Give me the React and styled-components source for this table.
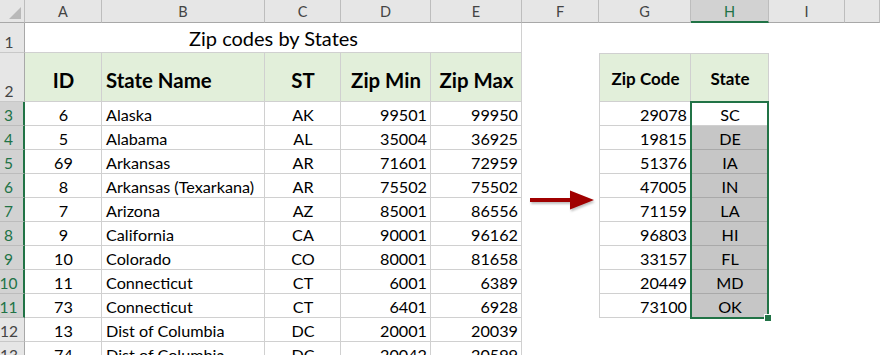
import React from "react";
import styled, { createGlobalStyle, css } from "styled-components";

const GlobalStyle = createGlobalStyle`
  html, body { margin: 0; padding: 0; background: #ffffff; }
  body { overflow: hidden; font-family: Lato, "Open Sans", sans-serif; }
`;

const GRID = "#d0d0d0";
const GREEN = "#217346";

const place = css`
  grid-column: ${(p) => p.$col};
  grid-row: ${(p) => p.$row};
`;

const Sheet = styled.div`
  position: relative;
  display: grid;
  grid-template-columns: 25px 77px 163px 76px 90px 91px 77px 92px 78px 76px 1fr;
  grid-template-rows: 23px 30px 49px repeat(11, 24px);
  width: 880px;
  height: 355px;
  overflow: hidden;
  font-family: Lato, "Open Sans", sans-serif;
  color: #000;
`;

const Corner = styled.div`
  ${place};
  position: relative;
  background: #e6e6e6;
  border-right: 1px solid #bdbdbd;
  border-bottom: 1px solid #a8a8a8;
  box-sizing: border-box;
  &::after {
    content: "";
    position: absolute;
    right: 3px;
    bottom: 3px;
    width: 0;
    height: 0;
    border-left: 12px solid transparent;
    border-bottom: 12px solid #b9b9b9;
  }
`;

const ColHeader = styled.div`
  ${place};
  box-sizing: border-box;
  display: flex;
  align-items: center;
  justify-content: center;
  background: ${(p) => (p.$selected ? "#d2d2d2" : "#e6e6e6")};
  color: ${(p) => (p.$selected ? GREEN : "#444")};
  border-right: 1px solid #bdbdbd;
  border-bottom: ${(p) => (p.$selected ? `2px solid ${GREEN}` : "1px solid #a8a8a8")};
  font-size: 14.5px;
  padding-top: 1px;
`;

const RowHeader = styled.div`
  ${place};
  box-sizing: border-box;
  display: flex;
  align-items: flex-end;
  justify-content: center;
  padding-right: 6px;
  background: ${(p) => (p.$selected ? "#d2d2d2" : "#e6e6e6")};
  color: ${(p) => (p.$selected ? GREEN : "#444")};
  border-right: ${(p) => (p.$selected ? `2px solid ${GREEN}` : "1px solid #a8a8a8")};
  border-bottom: 1px solid ${(p) => (p.$selected ? "#bcbcbc" : "#c8c8c8")};
  font-size: 15.5px;
  line-height: 20px;
`;

const Cell = styled.div`
  ${place};
  box-sizing: border-box;
  display: flex;
  align-items: flex-end;
  justify-content: ${(p) =>
    p.$align === "left" ? "flex-start" : p.$align === "right" ? "flex-end" : "center"};
  padding: 0 3px 0 4px;
  font-size: 16.2px;
  line-height: 20px;
  white-space: nowrap;
  overflow: hidden;
  background: ${(p) => p.$bg || "transparent"};
  border-right: 1px solid ${GRID};
  border-bottom: 1px solid ${(p) => p.$line || GRID};
  border-left: ${(p) => (p.$leftLine ? `1px solid ${GRID}` : "none")};
  border-top: ${(p) => (p.$topLine ? `1px solid ${GRID}` : "none")};
`;

const TitleCell = styled(Cell)`
  font-size: 20px;
  line-height: 26px;
  padding-bottom: 1px;
`;

const HeadCell = styled(Cell)`
  align-items: center;
  background: #e2efda;
  font-weight: 700;
  font-size: ${(p) => (p.$small ? "17px" : "20.4px")};
  padding-top: ${(p) => (p.$small ? "2px" : "5px")};
`;

const ArrowCell = styled.div`
  ${place};
  display: flex;
  align-items: center;
  padding: 5px 0 0 8px;
`;

const Arrow = styled.svg`
  display: block;
  filter: drop-shadow(1px 2px 1px rgba(0, 0, 0, 0.25));
`;

const Selection = styled.div`
  position: absolute;
  left: 690px;
  top: 101px;
  width: 79px;
  height: 218px;
  box-sizing: border-box;
  border: 2px solid ${GREEN};
  pointer-events: none;
`;

const FillHandle = styled.div`
  position: absolute;
  left: 765px;
  top: 315px;
  width: 6px;
  height: 6px;
  background: ${GREEN};
  box-shadow: 0 0 0 1px #ffffff;
`;

const data = [
  ["6", "Alaska", "AK", "99501", "99950"],
  ["5", "Alabama", "AL", "35004", "36925"],
  ["69", "Arkansas", "AR", "71601", "72959"],
  ["8", "Arkansas (Texarkana)", "AR", "75502", "75502"],
  ["7", "Arizona", "AZ", "85001", "86556"],
  ["9", "California", "CA", "90001", "96162"],
  ["10", "Colorado", "CO", "80001", "81658"],
  ["11", "Connecticut", "CT", "6001", "6389"],
  ["73", "Connecticut", "CT", "6401", "6928"],
  ["13", "Dist of Columbia", "DC", "20001", "20039"],
  ["74", "Dist of Columbia", "DC", "20042", "20599"],
];

const lookup = [
  ["29078", "SC"],
  ["19815", "DE"],
  ["51376", "IA"],
  ["47005", "IN"],
  ["71159", "LA"],
  ["96803", "HI"],
  ["33157", "FL"],
  ["20449", "MD"],
  ["73100", "OK"],
];

const letters = ["A", "B", "C", "D", "E", "F", "G", "H", "I", ""];
const aligns = ["center", "left", "center", "right", "right"];
const heads = [
  ["ID", "center"],
  ["State Name", "left"],
  ["ST", "center"],
  ["Zip Min", "center"],
  ["Zip Max", "center"],
];

export default function App() {
  return (
    <>
      <GlobalStyle />
      <Sheet>
        <Corner $col={1} $row={1} />
        {letters.map((l, i) => (
          <ColHeader key={"c" + i} $col={i + 2} $row={1} $selected={l === "H"}>
            {l}
          </ColHeader>
        ))}

        {/* Row 1 */}
        <RowHeader $col={1} $row={2}>1</RowHeader>
        <TitleCell $col="2 / span 5" $row={2}>
          Zip codes by States
        </TitleCell>

        {/* Row 2 */}
        <RowHeader $col={1} $row={3}>2</RowHeader>
        {heads.map(([t, a], i) => (
          <HeadCell key={t} $col={i + 2} $row={3} $align={a}>
            {t}
          </HeadCell>
        ))}
        <HeadCell $small $leftLine $topLine $col={8} $row={3}>
          Zip Code
        </HeadCell>
        <HeadCell $small $topLine $col={9} $row={3}>
          State
        </HeadCell>

        <ArrowCell $col={7} $row="7 / span 2">
          <Arrow width="66" height="21" viewBox="0 0 66 21">
            <rect x="0" y="8" width="43" height="4" fill="#a00000" />
            <polygon points="40,0.5 64,10 40,19.5" fill="#a00000" />
          </Arrow>
        </ArrowCell>

        {data.map((row, r) => {
          const excelRow = r + 3;
          const gridRow = excelRow + 1;
          const selected = excelRow <= 11;
          const lk = lookup[r];
          return (
            <React.Fragment key={r}>
              <RowHeader $selected={selected} $col={1} $row={gridRow}>
                {excelRow}
              </RowHeader>
              {row.map((v, c) => (
                <Cell key={c} $align={aligns[c]} $col={c + 2} $row={gridRow}>
                  {v}
                </Cell>
              ))}
              {lk && (
                <>
                  <Cell $align="right" $leftLine $col={8} $row={gridRow}>
                    {lk[0]}
                  </Cell>
                  <Cell
                    $bg={r === 0 ? "#ffffff" : "#c6c6c6"}
                    $line={r === 0 ? GRID : "#a9a9a9"}
                    $col={9}
                    $row={gridRow}
                  >
                    {lk[1]}
                  </Cell>
                </>
              )}
            </React.Fragment>
          );
        })}
        <Selection />
        <FillHandle />
      </Sheet>
    </>
  );
}
